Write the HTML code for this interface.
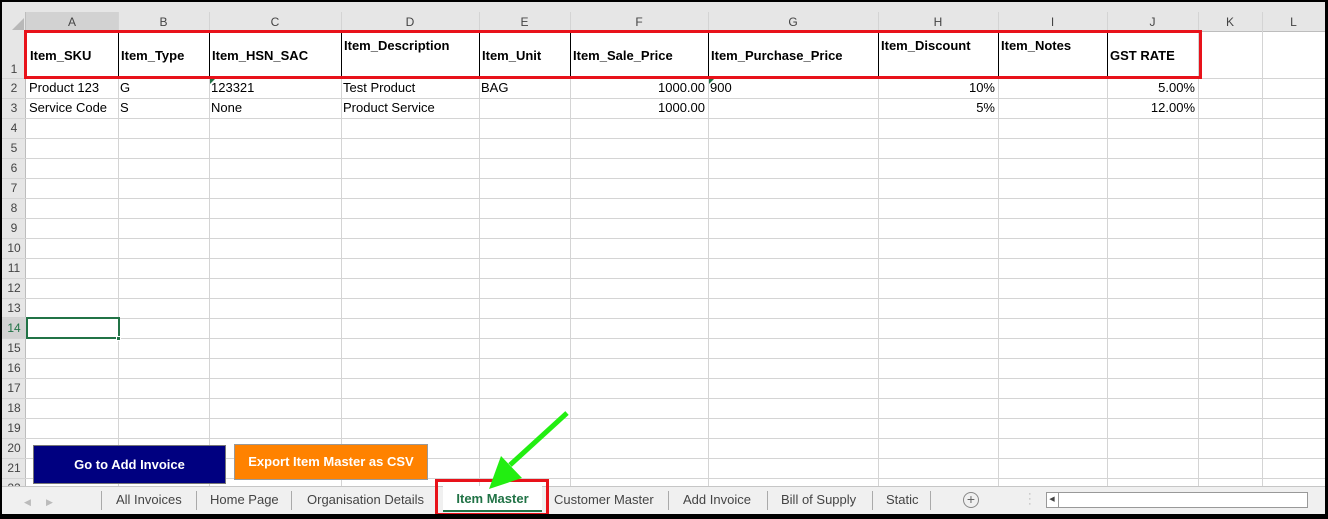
<!DOCTYPE html>
<html><head><style>
*{margin:0;padding:0;box-sizing:border-box}
body{width:1328px;height:519px;overflow:hidden;background:#000;position:relative;font-family:"Liberation Sans",Calibri,sans-serif}
#s{position:absolute;left:2px;top:2px;width:1323px;height:512px;background:#fff;overflow:hidden}
.a{position:absolute}
.vl{position:absolute;width:1px;background:#d4d4d4}
.hl{position:absolute;height:1px;background:#d4d4d4}
.ch{position:absolute;top:10px;height:20px;font-size:12px;color:#444;text-align:center;line-height:20px}
.rh{position:absolute;left:0;width:24px;font-size:12px;color:#444;text-align:center;line-height:20px}
.c{position:absolute;font-size:13px;color:#000;line-height:20px;white-space:nowrap}
.b{position:absolute;font-size:13px;font-weight:bold;color:#000;white-space:nowrap}
.r{text-align:right}
.tab{position:absolute;top:486px;height:24px;font-size:13px;color:#444;line-height:24px;white-space:nowrap}
.sep{position:absolute;top:489px;width:1px;height:19px;background:#aaa}
</style></head><body>
<div id="s">
<div class="a" style="left:0;top:0;width:1323px;height:10px;background:#e6e6e6"></div>
<div class="a" style="left:0;top:10px;width:1323px;height:20px;background:#e6e6e6;border-bottom:1px solid #bdbdbd"></div>
<div class="a" style="left:0;top:10px;width:24px;height:476px;background:#e6e6e6;border-right:1px solid #bdbdbd"></div>
<div class="a" style="left:10px;top:16px;width:0;height:0;border-left:12px solid transparent;border-bottom:12px solid #b8b8b8"></div>
<div class="a" style="left:0;top:315px;width:24px;height:21px;background:#d2d2d2"></div>
<div class="ch" style="left:24px;width:92px;background:#d2d2d2">A</div>
<div class="ch" style="left:116px;width:91px">B</div>
<div class="ch" style="left:207px;width:132px">C</div>
<div class="ch" style="left:339px;width:138px">D</div>
<div class="ch" style="left:477px;width:91px">E</div>
<div class="ch" style="left:568px;width:138px">F</div>
<div class="ch" style="left:706px;width:170px">G</div>
<div class="ch" style="left:876px;width:120px">H</div>
<div class="ch" style="left:996px;width:109px">I</div>
<div class="ch" style="left:1105px;width:91px">J</div>
<div class="ch" style="left:1196px;width:64px">K</div>
<div class="ch" style="left:1260px;width:63px">L</div>
<!-- vertical lines -->
<div class="vl" style="left:116px;top:10px;height:476px"></div>
<div class="vl" style="left:207px;top:10px;height:476px"></div>
<div class="vl" style="left:339px;top:10px;height:476px"></div>
<div class="vl" style="left:477px;top:10px;height:476px"></div>
<div class="vl" style="left:568px;top:10px;height:476px"></div>
<div class="vl" style="left:706px;top:10px;height:476px"></div>
<div class="vl" style="left:876px;top:10px;height:476px"></div>
<div class="vl" style="left:996px;top:10px;height:476px"></div>
<div class="vl" style="left:1105px;top:10px;height:476px"></div>
<div class="vl" style="left:1196px;top:10px;height:476px"></div>
<div class="vl" style="left:1260px;top:10px;height:476px"></div>
<!-- black header borders -->
<div class="a" style="left:116px;top:30px;width:1px;height:46px;background:#000"></div>
<div class="a" style="left:207px;top:30px;width:1px;height:46px;background:#000"></div>
<div class="a" style="left:339px;top:30px;width:1px;height:46px;background:#000"></div>
<div class="a" style="left:477px;top:30px;width:1px;height:46px;background:#000"></div>
<div class="a" style="left:568px;top:30px;width:1px;height:46px;background:#000"></div>
<div class="a" style="left:706px;top:30px;width:1px;height:46px;background:#000"></div>
<div class="a" style="left:876px;top:30px;width:1px;height:46px;background:#000"></div>
<div class="a" style="left:996px;top:30px;width:1px;height:46px;background:#000"></div>
<div class="a" style="left:1105px;top:30px;width:1px;height:46px;background:#000"></div>
<!-- horizontal lines -->
<div class="hl" style="left:0;top:76px;width:1323px"></div>
<div class="hl" style="left:0;top:96px;width:1323px"></div>
<div class="hl" style="left:0;top:116px;width:1323px"></div>
<div class="hl" style="left:0;top:136px;width:1323px"></div>
<div class="hl" style="left:0;top:156px;width:1323px"></div>
<div class="hl" style="left:0;top:176px;width:1323px"></div>
<div class="hl" style="left:0;top:196px;width:1323px"></div>
<div class="hl" style="left:0;top:216px;width:1323px"></div>
<div class="hl" style="left:0;top:236px;width:1323px"></div>
<div class="hl" style="left:0;top:256px;width:1323px"></div>
<div class="hl" style="left:0;top:276px;width:1323px"></div>
<div class="hl" style="left:0;top:296px;width:1323px"></div>
<div class="hl" style="left:0;top:316px;width:1323px"></div>
<div class="hl" style="left:0;top:336px;width:1323px"></div>
<div class="hl" style="left:0;top:356px;width:1323px"></div>
<div class="hl" style="left:0;top:376px;width:1323px"></div>
<div class="hl" style="left:0;top:396px;width:1323px"></div>
<div class="hl" style="left:0;top:416px;width:1323px"></div>
<div class="hl" style="left:0;top:436px;width:1323px"></div>
<div class="hl" style="left:0;top:456px;width:1323px"></div>
<div class="hl" style="left:0;top:476px;width:1323px"></div>
<!-- row numbers -->
<div class="rh" style="top:50px;height:26px;line-height:34px">1</div>
<div class="rh" style="top:76px">2</div><div class="rh" style="top:96px">3</div><div class="rh" style="top:116px">4</div><div class="rh" style="top:136px">5</div><div class="rh" style="top:156px">6</div><div class="rh" style="top:176px">7</div><div class="rh" style="top:196px">8</div><div class="rh" style="top:216px">9</div><div class="rh" style="top:236px">10</div><div class="rh" style="top:256px">11</div><div class="rh" style="top:276px">12</div><div class="rh" style="top:296px">13</div><div class="rh" style="top:316px;color:#217346">14</div><div class="rh" style="top:336px">15</div><div class="rh" style="top:356px">16</div><div class="rh" style="top:376px">17</div><div class="rh" style="top:396px">18</div><div class="rh" style="top:416px">19</div><div class="rh" style="top:436px">20</div><div class="rh" style="top:456px">21</div><div class="rh" style="top:476px">22</div>
<!-- header texts -->
<div class="b" style="left:28px;top:46px">Item_SKU</div>
<div class="b" style="left:119px;top:46px">Item_Type</div>
<div class="b" style="left:210px;top:46px">Item_HSN_SAC</div>
<div class="b" style="left:342px;top:36px">Item_Description</div>
<div class="b" style="left:480px;top:46px">Item_Unit</div>
<div class="b" style="left:571px;top:46px">Item_Sale_Price</div>
<div class="b" style="left:709px;top:46px">Item_Purchase_Price</div>
<div class="b" style="left:879px;top:36px">Item_Discount</div>
<div class="b" style="left:999px;top:36px">Item_Notes</div>
<div class="b" style="left:1108px;top:46px">GST RATE</div>
<!-- red box -->
<div class="a" style="left:22px;top:28px;width:1178px;height:49px;border:3px solid #e8121a"></div>
<!-- data -->
<div class="c" style="left:27px;top:76px">Product 123</div>
<div class="c" style="left:118px;top:76px">G</div>
<div class="c" style="left:209px;top:76px">123321</div>
<div class="c" style="left:341px;top:76px">Test Product</div>
<div class="c" style="left:479px;top:76px">BAG</div>
<div class="c r" style="left:568px;width:135px;top:76px">1000.00</div>
<div class="c" style="left:708px;top:76px">900</div>
<div class="c r" style="left:876px;width:117px;top:76px">10%</div>
<div class="c r" style="left:1105px;width:88px;top:76px">5.00%</div>
<div class="c" style="left:27px;top:96px">Service Code</div>
<div class="c" style="left:118px;top:96px">S</div>
<div class="c" style="left:209px;top:96px">None</div>
<div class="c" style="left:341px;top:96px">Product Service</div>
<div class="c r" style="left:568px;width:135px;top:96px">1000.00</div>
<div class="c r" style="left:876px;width:117px;top:96px">5%</div>
<div class="c r" style="left:1105px;width:88px;top:96px">12.00%</div>
<div class="a" style="left:208px;top:77px;border-top:5px solid #217346;border-right:5px solid transparent"></div>
<div class="a" style="left:707px;top:77px;border-top:5px solid #217346;border-right:5px solid transparent"></div>
<!-- selected cell -->
<div class="a" style="left:24px;top:315px;width:94px;height:22px;border:2px solid #217346"></div>
<div class="a" style="left:114px;top:334px;width:5px;height:5px;background:#217346;border:1px solid #fff"></div>
<!-- buttons -->
<div class="a" style="left:31px;top:443px;width:193px;height:39px;background:#000080;border:1px solid #777;color:#fff;font-weight:bold;font-size:13px;text-align:center;line-height:37px">Go to Add Invoice</div>
<div class="a" style="left:232px;top:442px;width:194px;height:36px;background:#ff8200;border:1px solid #999;color:#fff;font-weight:bold;font-size:13px;text-align:center;line-height:34px">Export Item Master as CSV</div>
<!-- tab bar -->
<div class="a" style="left:0;top:484px;width:1323px;height:28px;background:#f0f0f0;border-top:1px solid #c6c6c6"></div>
<div class="a" style="left:22px;top:495px;font-size:9px;color:#bbb">◀</div>
<div class="a" style="left:44px;top:495px;font-size:9px;color:#bbb">▶</div>
<div class="sep" style="left:99px"></div>
<div class="tab" style="left:114px">All Invoices</div>
<div class="sep" style="left:194px"></div>
<div class="tab" style="left:208px">Home Page</div>
<div class="sep" style="left:289px"></div>
<div class="tab" style="left:305px">Organisation Details</div>
<div class="a" style="left:441px;top:484px;width:99px;height:26px;background:#fff;border-bottom:2px solid #217346;color:#217346;font-weight:bold;font-size:13px;text-align:center;line-height:26px">Item Master</div>
<div class="tab" style="left:552px">Customer Master</div>
<div class="sep" style="left:666px"></div>
<div class="tab" style="left:681px">Add Invoice</div>
<div class="sep" style="left:765px"></div>
<div class="tab" style="left:779px">Bill of Supply</div>
<div class="sep" style="left:870px"></div>
<div class="tab" style="left:884px">Static</div>
<div class="sep" style="left:928px"></div>
<div class="a" style="left:961px;top:490px;width:16px;height:16px;border:1px solid #888;border-radius:50%;color:#666;font-size:14px;line-height:13px;text-align:center">+</div>
<div class="a" style="left:1026px;top:490px;font-size:11px;color:#aaa;line-height:5px">·<br>·<br>·</div>
<div class="a" style="left:1044px;top:490px;width:262px;height:16px;background:#fff;border:1px solid #999"></div>
<div class="a" style="left:1044px;top:490px;width:13px;height:16px;border-right:1px solid #999;font-size:7px;color:#444;text-align:center;line-height:15px">◀</div>
<div class="a" style="left:1076px;top:512px;width:30px;height:3px;background:#aaa"></div>
<!-- red tab box -->
<div class="a" style="left:433px;top:477px;width:114px;height:37px;border:3px solid #e8121a"></div>
</div>
<!-- arrow -->
<svg class="a" style="left:0;top:0" width="1328" height="519">
<line x1="567" y1="413" x2="510" y2="465" stroke="#22ee11" stroke-width="5"/>
<polygon points="489,489 501,456 522,478" fill="#22ee11"/>
</svg>
</body></html>
